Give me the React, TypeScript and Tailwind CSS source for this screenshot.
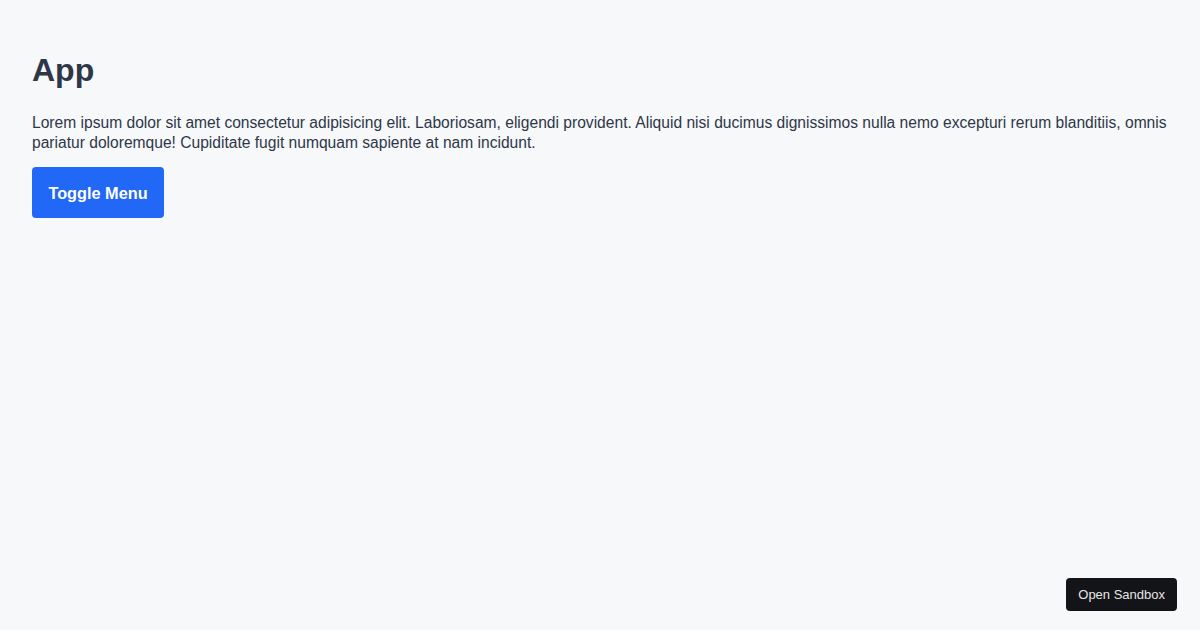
import React from "react";

export default function App() {
  return (
    <div
      className="min-h-screen bg-[#f7f8fa] px-8 pt-[50px] text-[#2d3748]"
      style={{ fontFamily: '"Liberation Sans", Arial, sans-serif' }}
    >
      <h1 className="text-[32px] font-bold leading-10">App</h1>
      <p className="mt-[23px] text-[15.6px] leading-5">
        Lorem ipsum dolor sit amet consectetur adipisicing elit. Laboriosam, eligendi provident. Aliquid nisi ducimus
        dignissimos nulla nemo excepturi rerum blanditiis, omnis pariatur doloremque! Cupiditate fugit numquam sapiente
        at nam incidunt.
      </p>
      <button className="mt-[14px] h-[51px] w-[132px] rounded bg-[#2168f6] text-[16.3px] font-bold leading-5 text-white">
        Toggle Menu
      </button>

      {/* Sandbox badge */}
      <button className="fixed bottom-[19px] right-[23px] rounded-[4px] bg-[#131417] px-3 py-[9px] text-[13px] leading-[15px] text-[#e6e6e6]">
        Open Sandbox
      </button>
    </div>
  );
}
